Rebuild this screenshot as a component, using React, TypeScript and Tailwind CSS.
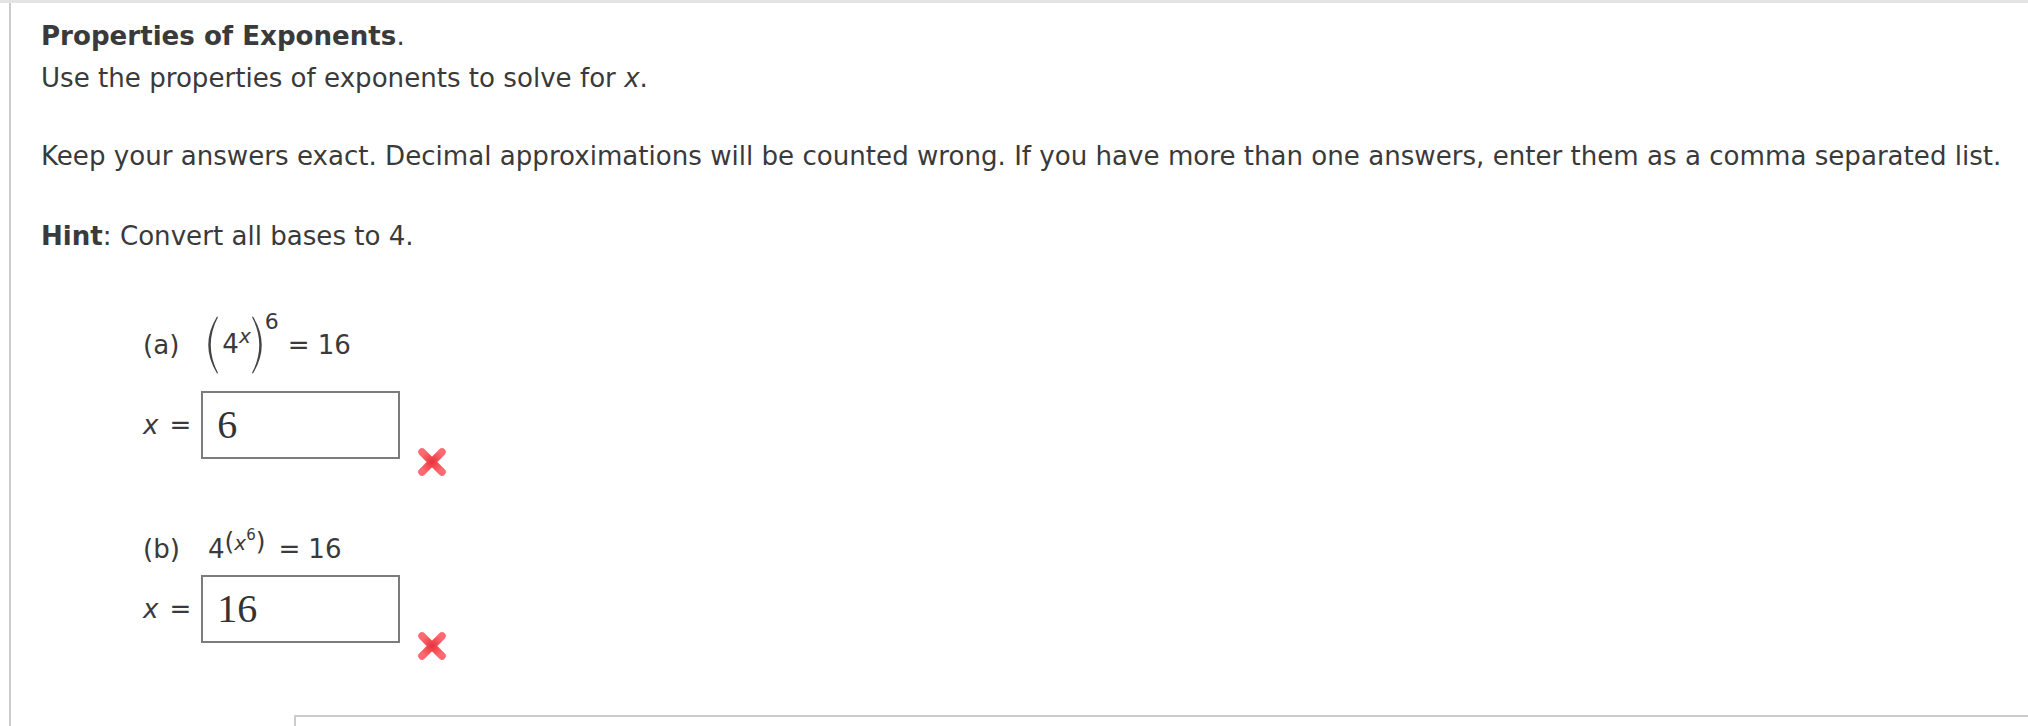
function Paren({ right = false }: { right?: boolean }) {
  return (
    <svg width="12" height="58" viewBox="0 0 12 58" className="shrink-0">
      {right ? (
        <path d="M2 0.5 Q19.5 29 2 57.5 L1 57 Q15.5 29 1 1 Z" fill="#444" />
      ) : (
        <path d="M10 0.5 Q-7.5 29 10 57.5 L11 57 Q-3.5 29 11 1 Z" fill="#444" />
      )}
    </svg>
  );
}

function WrongMark() {
  return (
    <svg width="30" height="30" viewBox="0 0 30 30" className="shrink-0 self-end -mb-[18px] ml-[17px]">
      <defs>
        <radialGradient id="xg" cx="50%" cy="50%" r="60%">
          <stop offset="0%" stopColor="#e8323c" />
          <stop offset="100%" stopColor="#fb6a70" />
        </radialGradient>
      </defs>
      <path d="M5 5 L25 25 M25 5 L5 25" stroke="url(#xg)" strokeWidth="7.5" strokeLinecap="round" />
    </svg>
  );
}

function AnswerRow({ value, top }: { value: string; top: string }) {
  return (
    <div className={`flex items-center h-[68px] ${top}`}>
      <div className="w-[102px] shrink-0" />
      <span className="italic">x</span>
      <span className="ml-[11px]">=</span>
      <div className="ml-[10px] w-[199px] h-[68px] border-2 border-[#7c7c7c] flex items-center pl-[14px] text-[40px] text-[#333] [font-family:'Liberation_Serif',serif]">
        {value}
      </div>
      <WrongMark />
    </div>
  );
}

export default function App() {
  return (
    <div className="min-h-[726px] bg-white text-[#3a3a3a] text-[26.1px] leading-[38px] [font-family:'DejaVu_Sans',Verdana,sans-serif]">
      <div className="h-[3px] bg-[#e4e4e4]" />
      <div className="ml-[9px] border-l-2 border-[#cccccc] h-[723px] pl-[30px] pt-[14px] flex flex-col">
        <div>
          <span className="font-bold">Properties of Exponents</span>.
        </div>
        <div className="mt-[4px]">
          Use the properties of exponents to solve for <span className="italic">x</span>.
        </div>
        <div className="mt-[40px]">
          Keep your answers exact. Decimal approximations will be counted wrong. If you have more than one answers,
          enter them as a comma separated list.
        </div>
        <div className="mt-[42px]">
          <span className="font-bold">Hint</span>: Convert all bases to 4.
        </div>

        {/* part (a) */}
        <div className="flex items-center h-[64px] mt-[58px]">
          <div className="w-[102px] shrink-0" />
          <span>(a)</span>
          <div className="ml-[28px]">
            <Paren />
          </div>
          <span className="ml-[3px]">
            4<span className="italic text-[20px] relative -top-[10px]">x</span>
          </span>
          <Paren right />
          <span className="self-start -mt-[2px] ml-[2px] text-[22px] leading-[22px]">6</span>
          <span className="ml-[9px]">=</span>
          <span className="ml-[8px]">16</span>
        </div>
        <AnswerRow value="6" top="mt-[14px]" />

        {/* part (b) */}
        <div className="flex items-baseline h-[38px] mt-[71px]">
          <div className="w-[102px] shrink-0" />
          <span>(b)</span>
          <span className="ml-[28px]">4</span>
          <span className="relative -top-[8px] leading-[38px]">
            <span className="text-[25px]">(</span>
            <span className="italic text-[20px]">x</span>
            <span className="text-[15px] relative -top-[10px]">6</span>
            <span className="text-[25px]">)</span>
          </span>
          <span className="ml-[13px]">=</span>
          <span className="ml-[8px]">16</span>
        </div>
        <AnswerRow value="16" top="mt-[7px]" />

        <div className="mt-[72px] ml-[253px] flex-1 border-t-2 border-l-2 border-[#cccccc]" />
      </div>
    </div>
  );
}
